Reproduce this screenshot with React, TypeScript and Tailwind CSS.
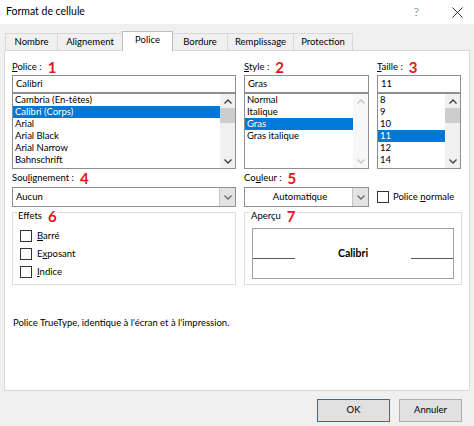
import React from "react";

const tabs = [
  { label: "Nombre", w: "w-[53px]" },
  { label: "Alignement", w: "w-[66px]" },
  { label: "Police", w: "w-[51px]", active: true },
  { label: "Bordure", w: "w-[56px]" },
  { label: "Remplissage", w: "w-[67px]" },
  { label: "Protection", w: "w-[60px]" },
];

function Num({ n }: { n: string }) {
  return <span className="ml-[6px] font-['Lato',sans-serif] text-[15px] font-bold leading-none text-[#e3141c]">{n}</span>;
}

function Chevron({ up, color }: { up?: boolean; color: string }) {
  return (
    <svg width="8" height="5" viewBox="0 0 8 5">
      <polyline
        points={up ? "0.5,4.5 4,1 7.5,4.5" : "0.5,0.5 4,4 7.5,0.5"}
        fill="none"
        stroke={color}
        strokeWidth="1.3"
      />
    </svg>
  );
}

function ScrollBar({ disabled }: { disabled?: boolean }) {
  const c = disabled ? "#c6c6c6" : "#3c3c3c";
  return (
    <div className={`flex w-[15px] flex-col ${disabled ? "bg-[#f7f7f7]" : "bg-[#f0f0f0]"}`}>
      <div className="flex h-[14px] items-center justify-center">
        <Chevron up color={c} />
      </div>
      {!disabled && <div className="h-[15px] bg-[#cdcdcd]" />}
      <div className="flex-1" />
      <div className="flex h-[14px] items-center justify-center">
        <Chevron color={c} />
      </div>
    </div>
  );
}

function ListBox({ items, selected, disabled }: { items: string[]; selected: number; disabled?: boolean }) {
  return (
    <div className="flex h-[76px] border border-[#8f8f8f] bg-white">
      <div className="flex-1">
        {items.map((it, i) => (
          <div
            key={it}
            className={`flex h-[12px] items-center pl-[2px] leading-none ${
              i === selected ? "bg-[#0078d7] text-white" : ""
            }`}
          >
            {it}
          </div>
        ))}
      </div>
      <ScrollBar disabled={disabled} />
    </div>
  );
}

function Input({ value }: { value: string }) {
  return <div className="flex h-[18px] items-center border border-[#8f8f8f] bg-white pl-[3px]">{value}</div>;
}

function Select({ value, center }: { value: string; center?: boolean }) {
  return (
    <div className="flex h-[20px] border border-[#8f8f8f] bg-white">
      <div className={`flex flex-1 items-center pl-[3px] ${center ? "justify-center" : ""}`}>{value}</div>
      <div className="flex w-[16px] items-center justify-center border-l border-[#c4c4c4] bg-[#e3e3e3]">
        <Chevron color="#6a6a6a" />
      </div>
    </div>
  );
}

function CheckBox() {
  return <div className="h-[12px] w-[12px] border border-[#333333] bg-white" />;
}

function Label({ children, n }: { children: React.ReactNode; n: string }) {
  return (
    <div className="flex h-[16px] items-center">
      <span>{children}</span>
      <Num n={n} />
    </div>
  );
}

export default function App() {
  return (
    <div className="flex h-[426px] w-[474px] flex-col bg-[#f0f0f0] font-['Lato',sans-serif] text-[9.5px] text-black">
      {/* Title bar */}
      <div className="flex h-[24px] items-center bg-white pl-[6px]">
        <span className="text-[10.5px]">Format de cellule</span>
        <span className="ml-auto text-[12px] font-light text-[#444]">?</span>
        <svg className="ml-[33px] mr-[11px]" width="11" height="11" viewBox="0 0 11 11">
          <path d="M0.5 0.5 L10.5 10.5 M10.5 0.5 L0.5 10.5" stroke="#333" strokeWidth="1" />
        </svg>
      </div>

      {/* Tabs */}
      <div className="flex h-[26px] items-end pl-[5px]">
        {tabs.map((t, i) =>
          t.active ? (
            <div
              key={t.label}
              className={`${t.w} relative z-10 -mb-[1px] -ml-[1px] flex h-[20px] items-center justify-center border border-b-0 border-[#bdbdbd] bg-white pb-[2px]`}
            >
              {t.label}
            </div>
          ) : (
            <div
              key={t.label}
              className={`${t.w} ${i > 0 ? "-ml-[1px]" : ""} flex h-[17px] items-center justify-center border border-b-0 border-[#d9d9d9] bg-[#f0f0f0]`}
            >
              {t.label}
            </div>
          )
        )}
      </div>

      {/* Panel */}
      <div className="mx-[4px] h-[341px] border border-[#d9d9d9] bg-white pl-[7px] pt-[8px]">
        <div className="flex">
          <div className="w-[224px]">
            <Label n="1">
              <u>P</u>olice :
            </Label>
            <Input value="Calibri" />
            <ListBox
              items={["Cambria (En-têtes)", "Calibri (Corps)", "Arial", "Arial Black", "Arial Narrow", "Bahnschrift"]}
              selected={1}
            />
            <div className="flex h-[18px] items-center">
              <span>
                Sou<u>l</u>ignement :
              </span>
              <Num n="4" />
            </div>
            <Select value="Aucun" />
          </div>

          <div className="ml-[8px] w-[125px]">
            <Label n="2">
              <u>S</u>tyle :
            </Label>
            <Input value="Gras" />
            <ListBox items={["Normal", "Italique", "Gras", "Gras italique"]} selected={2} disabled />
            <div className="flex h-[18px] items-center">
              <span>
                Co<u>u</u>leur :
              </span>
              <Num n="5" />
            </div>
            <Select value="Automatique" center />
          </div>

          <div className="ml-[8px] w-[84px]">
            <Label n="3">
              <u>T</u>aille :
            </Label>
            <Input value="11" />
            <ListBox items={["8", "9", "10", "11", "12", "14"]} selected={3} />
            <div className="h-[18px]" />
            <div className="flex h-[20px] items-center gap-[4px]">
              <CheckBox />
              <span>
                Police <u>n</u>ormale
              </span>
            </div>
          </div>
        </div>

        {/* Groups */}
        <div className="mt-[5px] flex">
          <div className="h-[73px] w-[224px] border border-[#dcdcdc]">
            <div className="-mt-[3px] ml-[4px] flex h-[12px] w-fit items-center bg-white px-[1px]">
              <span>Effets</span>
              <Num n="6" />
            </div>
            <div className="mt-[5px] pl-[7px]">
              {[
                ["B", "arré"],
                ["E", "x", "posant"],
                ["", "I", "ndice"],
              ].map((parts, i) => (
                <div key={i} className="flex h-[18px] items-center gap-[5px]">
                  <CheckBox />
                  <span>
                    {parts.length === 2 ? (
                      <>
                        <u>{parts[0]}</u>
                        {parts[1]}
                      </>
                    ) : (
                      <>
                        {parts[0]}
                        <u>{parts[1]}</u>
                        {parts[2]}
                      </>
                    )}
                  </span>
                </div>
              ))}
            </div>
          </div>

          <div className="ml-[8px] h-[73px] w-[218px] border border-[#dcdcdc] px-[7px]">
            <div className="-mt-[3px] -ml-[2px] flex h-[12px] w-fit items-center bg-white px-[1px]">
              <span>Aperçu</span>
              <Num n="7" />
            </div>
            <div className="mt-[6px] flex h-[51px] items-center border border-[#a0a0a0]">
              <div className="mt-[10px] h-px w-[42px] bg-[#5a5a5a]" />
              <div className="flex-1 text-center text-[10.5px] font-bold">Calibri</div>
              <div className="mt-[10px] h-px w-[42px] bg-[#5a5a5a]" />
            </div>
          </div>
        </div>

        <div className="mt-[32px] flex h-[12px] items-center pl-[1px]">
          Police TrueType, identique à l'écran et à l'impression.
        </div>
      </div>

      {/* Footer */}
      <div className="flex justify-end gap-[9px] pr-[12px] pt-[8px]">
        <button className="flex h-[23px] w-[73px] items-center justify-center border border-[#0078d7] bg-[#e1e1e1]">
          OK
        </button>
        <button className="flex h-[23px] w-[63px] items-center justify-center border border-[#adadad] bg-[#e1e1e1]">
          Annuler
        </button>
      </div>
    </div>
  );
}
